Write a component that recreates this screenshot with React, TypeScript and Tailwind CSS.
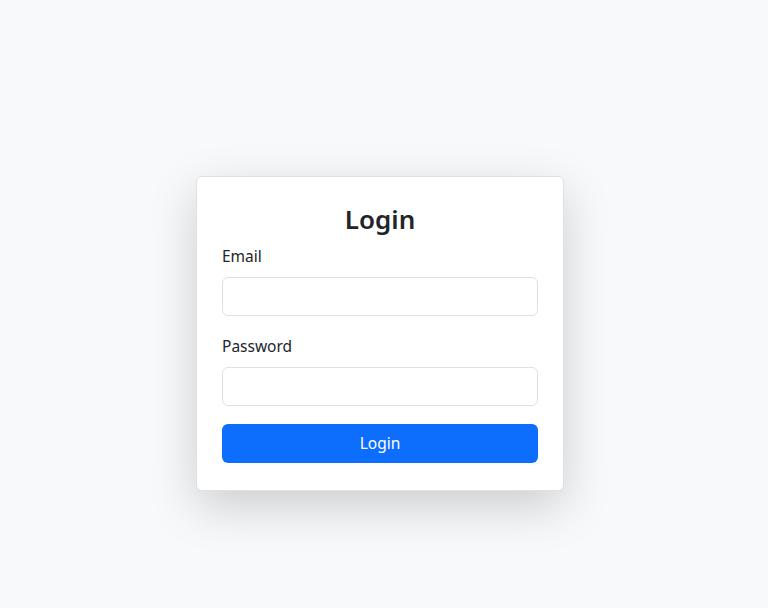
import React from 'react';

export default function App() {
  return (
    <div className="min-h-screen bg-[#f8f9fa] pt-[176px] flex justify-center font-['Noto_Sans',sans-serif] text-[#212529]">
      <div className="w-[368px] h-fit mr-[8px] bg-white border border-[#dee2e6] rounded-[6px] px-[25px] pt-[25px] pb-[27px] shadow-[0_16px_48px_rgba(0,0,0,0.175)]">
        <h3 className="text-[26px] leading-[34px] font-semibold text-center mb-2">Login</h3>
        <form onSubmit={(e) => e.preventDefault()}>
          <div className="mb-[18px]">
            <label className="block text-[15.5px] leading-6 mb-[9px]">Email</label>
            <input
              type="email"
              className="block w-full h-[39px] px-3 border border-[#dee2e6] rounded-[6px] bg-white text-base outline-none"
            />
          </div>
          <div className="mb-[18px]">
            <label className="block text-[15.5px] leading-6 mb-[9px]">Password</label>
            <input
              type="password"
              className="block w-full h-[39px] px-3 border border-[#dee2e6] rounded-[6px] bg-white text-base outline-none"
            />
          </div>
          <button
            type="submit"
            className="block w-full h-[39px] bg-[#0d6efd] text-white text-[15.5px] rounded-[6px]"
          >
            Login
          </button>
        </form>
      </div>
    </div>
  );
}
